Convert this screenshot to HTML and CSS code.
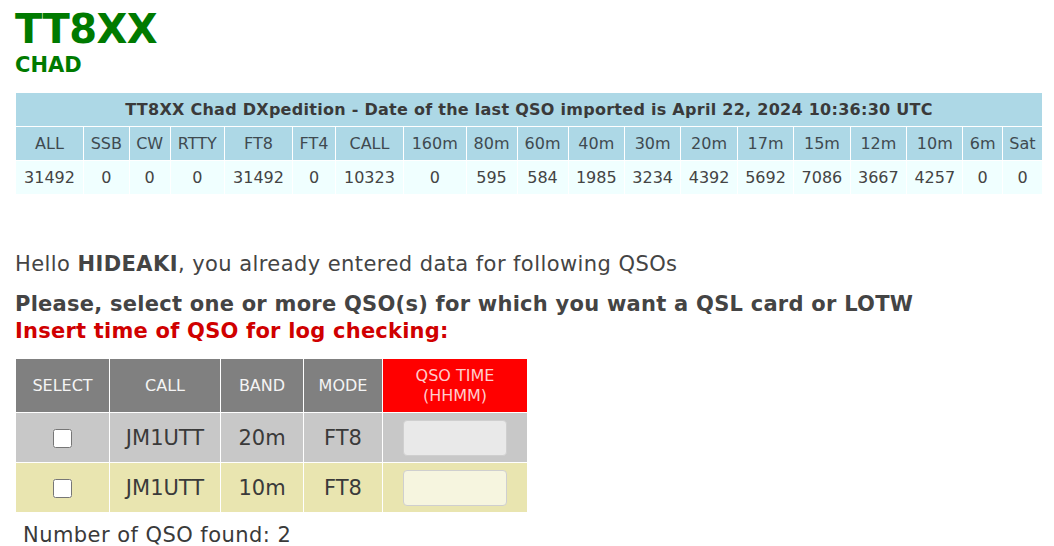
FILE: index.html
```html
<!DOCTYPE html>
<html>
<head>
<meta charset="utf-8">
<title>TT8XX</title>
<link rel="stylesheet" href="styles.css">
</head>
<body>
<div class="page">
  <h1 class="call">TT8XX</h1>
  <h2 class="country">CHAD</h2>

  <table class="stats">
    <tr><th class="stats-title" colspan="19">TT8XX Chad DXpedition - Date of the last QSO imported is April 22, 2024 10:36:30 UTC</th></tr>
    <tr class="stats-head">
      <td>ALL</td><td>SSB</td><td>CW</td><td>RTTY</td><td>FT8</td><td>FT4</td><td>CALL</td><td>160m</td><td>80m</td><td>60m</td><td>40m</td><td>30m</td><td>20m</td><td>17m</td><td>15m</td><td>12m</td><td>10m</td><td>6m</td><td>Sat</td>
    </tr>
    <tr class="stats-data">
      <td>31492</td><td>0</td><td>0</td><td>0</td><td>31492</td><td>0</td><td>10323</td><td>0</td><td>595</td><td>584</td><td>1985</td><td>3234</td><td>4392</td><td>5692</td><td>7086</td><td>3667</td><td>4257</td><td>0</td><td>0</td>
    </tr>
  </table>

  <p class="hello">Hello <b>HIDEAKI</b>, you already entered data for following QSOs</p>
  <p class="select-msg">Please, select one or more QSO(s) for which you want a QSL card or LOTW</p>
  <p class="insert-msg">Insert time of QSO for log checking:</p>

  <table class="qsos">
    <tr class="qsos-head">
      <th class="c-sel">SELECT</th><th class="c-call">CALL</th><th class="c-band">BAND</th><th class="c-mode">MODE</th><th class="c-time">QSO TIME<br>(HHMM)</th>
    </tr>
    <tr class="row-odd">
      <td><input type="checkbox" class="chk"></td><td>JM1UTT</td><td>20m</td><td>FT8</td><td><input type="text" class="time-in"></td>
    </tr>
    <tr class="row-even">
      <td><input type="checkbox" class="chk"></td><td>JM1UTT</td><td>10m</td><td>FT8</td><td><input type="text" class="time-in"></td>
    </tr>
  </table>
  <p class="count">Number of QSO found: 2</p>
</div>
</body>
</html>
```
FILE: styles.css
```css
html, body {
  margin: 0;
  padding: 0;
  background: #ffffff;
}
body {
  font-family: "DejaVu Sans", Verdana, sans-serif;
  color: #444444;
}
.page {
  padding: 5px 0 0 15px;
}
.call {
  margin: 0;
  font-size: 40px;
  font-weight: bold;
  letter-spacing: -0.6px;
  color: #007a00;
  line-height: 48px;
}
.country {
  margin: 0;
  font-size: 21px;
  font-weight: bold;
  color: #007a00;
  line-height: 24px;
}
.stats {
  margin-top: 15px;
  width: 1028px;
  border-collapse: collapse;
  font-size: 16px;
}
.stats td, .stats th {
  border: 1px solid #ffffff;
  text-align: center;
  padding: 0 4px;
  height: 33px;
}
.stats-title {
  background: #add8e6;
  font-weight: bold;
  letter-spacing: 0.27px;
  color: #3a3a3a;
}
.stats-head td {
  background: #add8e6;
  color: #3f4a50;
}
.stats-data td {
  background: #f0ffff;
  color: #444444;
}
.hello {
  margin: 57px 0 0;
  font-size: 21px;
  letter-spacing: 0.43px;
  line-height: 24px;
}
.select-msg {
  margin: 15px 0 0;
  font-size: 21px;
  font-weight: bold;
  letter-spacing: 0.25px;
  line-height: 27px;
}
.insert-msg {
  margin: 0;
  font-size: 21px;
  font-weight: bold;
  letter-spacing: 0.22px;
  color: #d00000;
  line-height: 27px;
}
.qsos {
  margin-top: 13px;
  border-collapse: collapse;
}
.qsos th, .qsos td {
  border: 1px solid #ffffff;
  text-align: center;
  padding: 0;
}
.qsos-head th {
  background: #808080;
  color: #f4f4f4;
  font-weight: normal;
  font-size: 16px;
  height: 53px;
  line-height: 20px;
}
.qsos th.c-time {
  background: #ff0000;
  color: #ffcccc;
}
.c-sel { width: 93px; }
.c-call { width: 110px; }
.c-band { width: 82px; }
.c-mode { width: 78px; }
.c-time { width: 144px; }
.qsos td {
  font-size: 21px;
  color: #3a3a3a;
  height: 49px;
}
.row-odd td { background: #c8c8c8; }
.row-even td { background: #e9e5b0; }
.chk {
  width: 19px;
  height: 19px;
  margin: 0;
  vertical-align: middle;
}
.time-in {
  box-sizing: border-box;
  width: 104px;
  height: 36px;
  border: 1px solid #cfcfcf;
  border-radius: 4px;
  background: rgba(255, 255, 255, 0.6);
  vertical-align: middle;
}
.count {
  margin: 10px 0 0 8px;
  font-size: 21px;
  letter-spacing: 0.45px;
  line-height: 24px;
  color: #3a3a3a;
}
```
